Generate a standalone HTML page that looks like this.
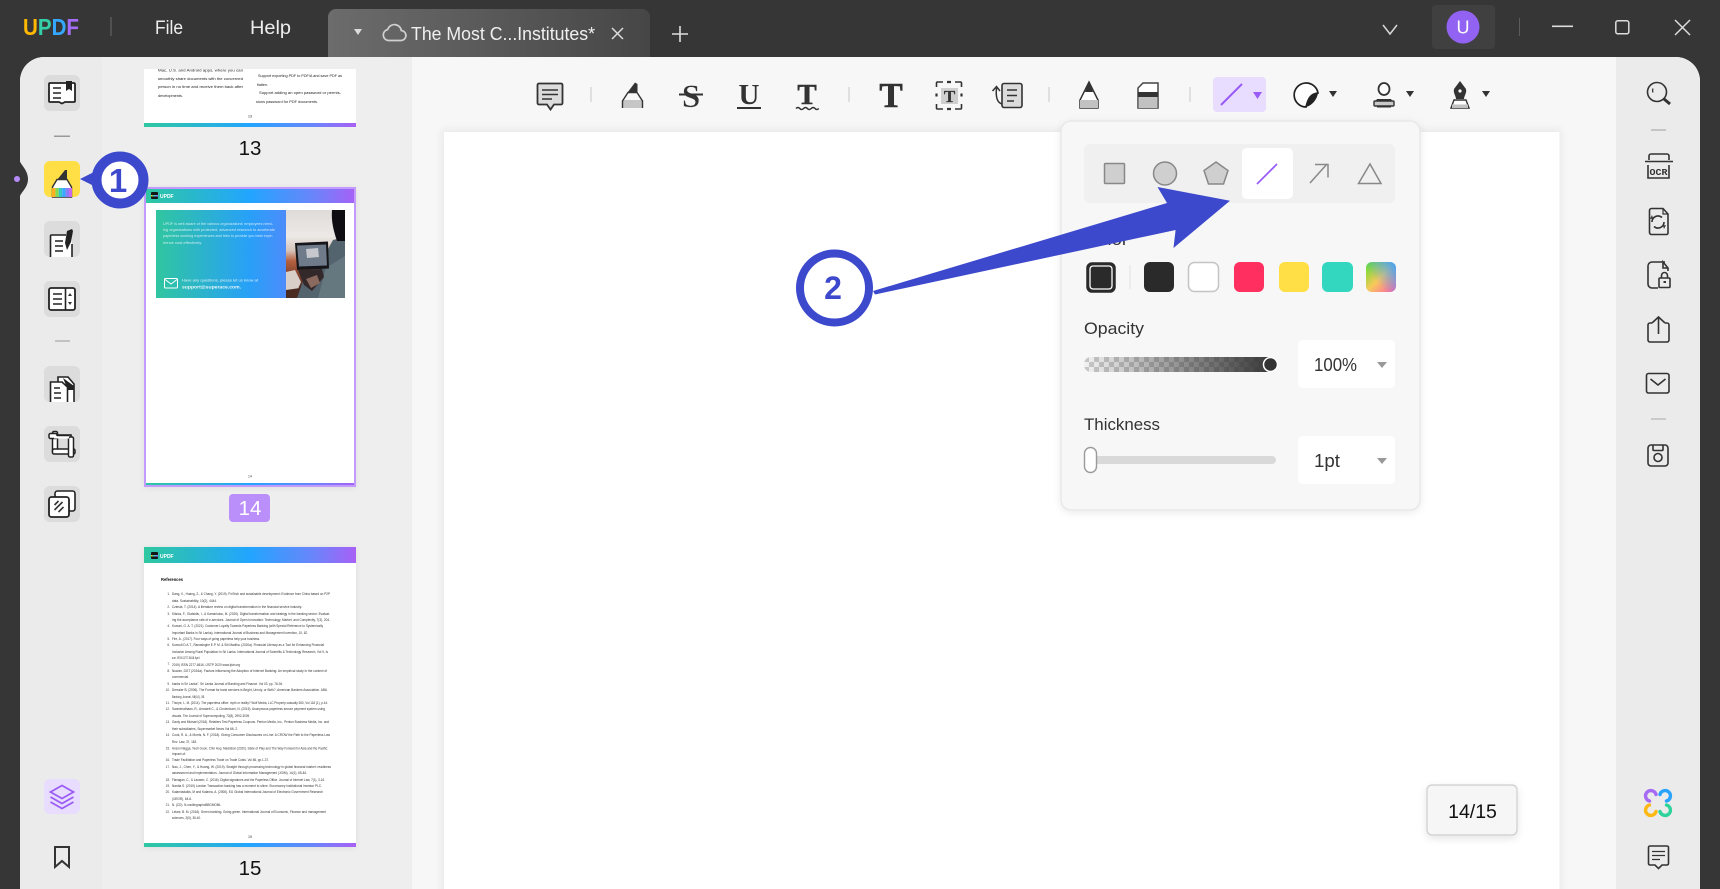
<!DOCTYPE html>
<html><head><meta charset="utf-8"><title>UPDF</title>
<style>html,body{margin:0;padding:0;background:#363636;overflow:hidden;width:1720px;height:889px}svg{display:block;font-family:"Liberation Sans",sans-serif}</style></head>
<body>
<svg width="1720" height="889" viewBox="0 0 1720 889" xmlns="http://www.w3.org/2000/svg">
<defs>
<linearGradient id="tab" x1="0" x2="1" y1="0" y2="0"><stop offset="0" stop-color="#6c6c6c"/><stop offset="1" stop-color="#464646"/></linearGradient>
<linearGradient id="bar" x1="0" x2="1" y1="0" y2="0"><stop offset="0" stop-color="#2ec8a0"/><stop offset=".5" stop-color="#22a5ff"/><stop offset=".8" stop-color="#6a85fb"/><stop offset="1" stop-color="#a860f5"/></linearGradient>
<linearGradient id="card" x1="0" x2="1" y1="0" y2="0"><stop offset="0" stop-color="#30c6a0"/><stop offset=".72" stop-color="#28a0f8"/><stop offset="1" stop-color="#4c8cfa"/></linearGradient>
<linearGradient id="rb" x1="0" x2="1" y1="0" y2="0"><stop offset="0" stop-color="#ffc21c"/><stop offset=".3" stop-color="#4fd67a"/><stop offset=".6" stop-color="#36b2ff"/><stop offset="1" stop-color="#c36af5"/></linearGradient>
<linearGradient id="photo" x1="0" x2="0" y1="0" y2="1"><stop offset="0" stop-color="#dedbd9"/><stop offset=".3" stop-color="#ece9e7"/><stop offset=".46" stop-color="#d6c4ba"/><stop offset=".58" stop-color="#b5603f"/><stop offset=".76" stop-color="#7a3f2c"/><stop offset="1" stop-color="#221c1e"/></linearGradient>
<linearGradient id="op" x1="0" x2="1" y1="0" y2="0"><stop offset="0" stop-color="#333" stop-opacity="0"/><stop offset="1" stop-color="#333"/></linearGradient>
<linearGradient id="sw1" x1="0" x2="1" y1="0" y2="1"><stop offset="0" stop-color="#58e02e"/><stop offset=".5" stop-color="#f7c95a"/><stop offset="1" stop-color="#ff5ab0"/></linearGradient>
<linearGradient id="sw2" x1="1" x2="0.3" y1="0" y2="0.6"><stop offset="0" stop-color="#3aa0ff"/><stop offset="1" stop-color="#3aa0ff" stop-opacity="0"/></linearGradient>
<pattern id="chk" width="10" height="10" patternUnits="userSpaceOnUse" x="1084" y="357"><rect width="10" height="10" fill="#f2f2f2"/><rect width="5" height="5" fill="#c8c8c8"/><rect x="5" y="5" width="5" height="5" fill="#c8c8c8"/></pattern>
<clipPath id="clip13"><rect x="144" y="69" width="212" height="58"/></clipPath>
<clipPath id="photoClip"><rect x="286" y="210" width="59" height="88"/></clipPath>
<filter id="sh" x="-10%" y="-10%" width="120%" height="120%"><feDropShadow dx="0" dy="1" stdDeviation="3" flood-color="#000" flood-opacity=".07"/></filter>
<filter id="shp" x="-10%" y="-10%" width="120%" height="120%"><feDropShadow dx="0" dy="2" stdDeviation="4" flood-color="#000" flood-opacity=".08"/></filter>
<filter id="sh2" x="-5%" y="-5%" width="110%" height="110%"><feGaussianBlur stdDeviation="4"/></filter>
<filter id="sh3" x="-20%" y="-20%" width="140%" height="150%"><feDropShadow dx="0" dy="3" stdDeviation="4" flood-color="#000" flood-opacity=".1"/></filter>
</defs>

<rect width="1720" height="889" fill="#363636"/>

<!-- title bar -->
<text x="23" y="35" font-size="23" font-weight="bold" textLength="56" lengthAdjust="spacingAndGlyphs"><tspan fill="#ffb800">U</tspan><tspan fill="#34cfa8">P</tspan><tspan fill="#35a8ff">D</tspan><tspan fill="#a56cf7">F</tspan></text>
<rect x="110.500" y="17" width="1" height="19" fill="#6a6a6a"/>
<text x="155" y="34" font-size="19" fill="#eee" textLength="28" lengthAdjust="spacingAndGlyphs">File</text>
<text x="250" y="34" font-size="19" fill="#eee" textLength="41" lengthAdjust="spacingAndGlyphs">Help</text>
<path d="M328 65V17a8 8 0 0 1 8-8H642a8 8 0 0 1 8 8V65Z" fill="url(#tab)"/>
<path d="M354 29h8l-4 6z" fill="#ddd"/>
<path d="M388 40.500h12.500a5 5 0 0 0 .8-10 7 7 0 0 0-13.600-1 5.600 5.600 0 0 0 .3 11Z" fill="none" stroke="#d0d0d0" stroke-width="1.700"/>
<text x="411" y="40" font-size="18.500" fill="#f0f0f0" textLength="184" lengthAdjust="spacingAndGlyphs">The Most C...Institutes*</text>
<path d="M612 28l11 11M623 28l-11 11" stroke="#ddd" stroke-width="1.500" fill="none"/>
<path d="M680 26v16M672 34h16" stroke="#ddd" stroke-width="1.600" fill="none"/>
<path d="M1383 25l7 9 7-9" stroke="#d8d8d8" stroke-width="1.500" fill="none"/>
<rect x="1432" y="5" width="63" height="44" rx="4" fill="#404040"/>
<ellipse cx="1463" cy="27" rx="16.500" ry="16.500" fill="#9263f2"/>
<text x="1463" y="33.500" font-size="18" fill="#fff" text-anchor="middle">U</text>
<rect x="1519" y="18" width="1" height="18" fill="#5c5c5c"/>
<rect x="1552" y="25.500" width="21" height="1.600" fill="#ddd"/>
<rect x="1615.800" y="20.800" width="13" height="13" rx="2" fill="none" stroke="#ddd" stroke-width="1.500"/>
<path d="M1675 20l15 15M1690 20l-15 15" stroke="#ddd" stroke-width="1.500" fill="none"/>

<!-- main panel -->
<path d="M20 889V81a24 24 0 0 1 24-24H1676a24 24 0 0 1 24 24V889Z" fill="#f7f7f7"/>
<path d="M20 889V81a24 24 0 0 1 24-24H102V889Z" fill="#ebebeb"/>
<rect x="102" y="57" width="310" height="832" fill="#eeeeee"/>
<path d="M1616 57H1676a24 24 0 0 1 24 24V889H1616Z" fill="#ebebeb"/>
<path d="M19 158c0 6 9 11 9 21s-9 14-9 21Z" fill="#363636"/>
<circle cx="17" cy="179" r="3" fill="#b68cfa"/>

<!-- document page -->
<rect x="441" y="129" width="1121" height="770" fill="#000" opacity=".05" filter="url(#sh2)"/>
<rect x="444" y="132" width="1115.500" height="757" fill="#fff"/>

<!-- left rail -->
<rect x="44" y="75" width="36" height="36" rx="6" fill="#dcdcdc"/>
<path d="M50 83H74a1.500 1.500 0 0 1 1 1.500V101a1 1 0 0 1-1 1H65l-3 1.500-3-1.500H50a1 1 0 0 1-1-1V84a1 1 0 0 1 1-1Z" fill="#fff" stroke="#222" stroke-width="1.800"/>
<path d="M66 81h6v10l-3-2-3 2Z" fill="#222"/>
<path d="M53 88h8M53 93h8M53 98h8" stroke="#222" stroke-width="1.600"/>
<rect x="54" y="135.500" width="16" height="1.500" fill="#999"/>
<rect x="44" y="161" width="36" height="36" rx="6" fill="#ffdf45"/>
<path d="M57 180l8-10h2v10Z" fill="#333"/>
<path d="M57 179.500H67L71.500 187V197H52.500V187Z" fill="#fff" stroke="#333" stroke-width="1.400"/>
<g><rect x="52" y="188" width="3.400" height="9" fill="#ffb01f"/><rect x="55.400" y="188" width="3.400" height="9" fill="#7fd858"/><rect x="58.800" y="188" width="3.400" height="9" fill="#35c8c0"/><rect x="62.200" y="188" width="3.400" height="9" fill="#3aa7ff"/><rect x="65.600" y="188" width="3.400" height="9" fill="#8a7ef8"/><rect x="69" y="188" width="3" height="9" fill="#c56af0"/></g>
<rect x="44" y="221" width="36" height="36" rx="6" fill="#dcdcdc"/>
<path d="M50.500 257V236a1 1 0 0 1 1-1H72V257Z" fill="#fff"/>
<path d="M50.500 257V236a1 1 0 0 1 1-1H66M72 244V257" fill="none" stroke="#222" stroke-width="1.600"/>
<path d="M55 241h8M55 246h8M55 251h8" stroke="#222" stroke-width="1.500"/>
<path d="M67 231l5-2 1 2-2 11-4 8-2-7Z" fill="#222"/>
<rect x="44" y="281" width="36" height="36" rx="6" fill="#dcdcdc"/>
<rect x="49" y="288" width="26" height="22" rx="2" fill="#fff" stroke="#222" stroke-width="1.800"/>
<path d="M65.500 288v22" stroke="#222" stroke-width="1.600"/>
<path d="M53 294h9M53 299h9M53 304h9" stroke="#222" stroke-width="1.500"/>
<path d="M68 296l2-3 2 3ZM68 302l2 3 2-3Z" fill="#333"/>
<rect x="55" y="340.500" width="15" height="1" fill="#999"/>
<rect x="44" y="366" width="36" height="36" rx="6" fill="#dcdcdc"/>
<path d="M58 402V377h10l6 7V402" fill="#fff" stroke="#222" stroke-width="1.600"/>
<path d="M50.500 402V382H62l5.500 5V402Z" fill="#fff"/>
<path d="M50.500 402V382H62l5.500 5V402" fill="none" stroke="#222" stroke-width="1.600"/>
<path d="M54 388h6M54 393h7M54 398h7" stroke="#222" stroke-width="1.500"/>
<path d="M63 378l11 8v4h-6Z" fill="#222"/>
<rect x="44" y="426" width="36" height="36" rx="6" fill="#dcdcdc"/>
<rect x="57" y="435" width="14" height="16" fill="#dcdcdc" stroke="#222" stroke-width="1.600"/>
<rect x="52.500" y="431.500" width="5" height="22" rx="1.500" fill="#fff" stroke="#222" stroke-width="1.500"/>
<rect x="49" y="433.500" width="8" height="5" rx="1.500" fill="#fff" stroke="#222" stroke-width="1.500"/>
<rect x="52.500" y="449" width="22.500" height="5" rx="1.500" fill="#fff" stroke="#222" stroke-width="1.500"/>
<rect x="68.500" y="437" width="5" height="20" rx="1.500" fill="#fff" stroke="#222" stroke-width="1.500"/>
<rect x="54" y="436" width="15" height="2.500" fill="#fff"/>
<path d="M57 435.500h12" stroke="#222" stroke-width="1.500"/>
<rect x="44" y="486" width="36" height="36" rx="6" fill="#dcdcdc"/>
<rect x="55" y="491" width="20" height="20" rx="2.500" fill="#fff" stroke="#222" stroke-width="1.600"/>
<rect x="49" y="497" width="20" height="20" rx="2.500" fill="#fff" stroke="#222" stroke-width="1.800"/>
<path d="M54.500 505l4-4M54.500 510l8-8M58.500 512l5-5" stroke="#333" stroke-width="1.600"/>
<rect x="44" y="779" width="36" height="35" rx="6" fill="#e8dcff"/>
<path d="M50.500 792l11.500-6.500 11.500 6.500-11.500 6.500Z" fill="none" stroke="#9a5cf5" stroke-width="1.800"/>
<path d="M50.500 797l11.500 6.500 11.500-6.500M50.500 802l11.500 6.500 11.500-6.500" fill="none" stroke="#9a5cf5" stroke-width="1.800"/>
<path d="M55 847H69V867L62 861L55 867Z" fill="none" stroke="#333" stroke-width="2"/>

<!-- thumbnail 13 -->
<g clip-path="url(#clip13)">
<rect x="144" y="60" width="212" height="67" fill="#fff"/>
<g font-size="4" fill="#222">
<text x="158" y="71.500" textLength="85" lengthAdjust="spacingAndGlyphs">Mac, U.S. and Android apps, where you can</text>
<text x="158" y="80" textLength="85" lengthAdjust="spacingAndGlyphs">smoothly share documents with the concerned</text>
<text x="158" y="88" textLength="85" lengthAdjust="spacingAndGlyphs">person in no time and receive them back after</text>
<text x="158" y="97" textLength="25" lengthAdjust="spacingAndGlyphs">developments.</text>
<text x="258" y="77" textLength="84" lengthAdjust="spacingAndGlyphs">Support exporting PDF to PDF/A and save PDF as</text>
<text x="257" y="86" textLength="11" lengthAdjust="spacingAndGlyphs">flatten.</text>
<text x="259" y="94" textLength="82" lengthAdjust="spacingAndGlyphs">Support adding an open password or permis-</text>
<text x="256" y="103" textLength="62" lengthAdjust="spacingAndGlyphs">sions password for PDF documents.</text>
<text x="250" y="117.500" text-anchor="middle" font-size="3.500">13</text>
</g>
<rect x="144" y="123" width="212" height="4" fill="url(#bar)"/>
</g>
<text x="250" y="155" font-size="20.500" fill="#111" text-anchor="middle">13</text>

<!-- thumbnail 14 -->
<rect x="144" y="187" width="212" height="300" fill="#fff" filter="url(#sh)"/>
<rect x="144" y="187" width="212" height="16" fill="url(#bar)"/>
<rect x="151" y="192" width="7" height="7" rx="1" fill="#161616"/><rect x="151" y="195" width="7" height="1.500" fill="url(#rb)"/>
<text x="160" y="198" font-size="5" font-weight="bold" fill="#fff">UPDF</text>
<rect x="156" y="210" width="130" height="88" fill="url(#card)"/>
<g font-size="3.500" fill="#fff" opacity=".75">
<text x="163" y="225" textLength="110" lengthAdjust="spacingAndGlyphs">UPDF is well aware of the various organizations' employees need-</text>
<text x="163" y="231" textLength="112" lengthAdjust="spacingAndGlyphs">ing organizations with protected, advanced research to accelerate</text>
<text x="163" y="237" textLength="110" lengthAdjust="spacingAndGlyphs">paperless working experiences and tries to provide you best expe-</text>
<text x="163" y="244" textLength="39" lengthAdjust="spacingAndGlyphs">rience cost-effectively.</text>
</g>
<rect x="164.500" y="278.500" width="13" height="9.500" rx="1" fill="none" stroke="#fff" stroke-width="1"/>
<path d="M165 279.500l6 4.500 6-4.500" fill="none" stroke="#fff" stroke-width="1"/>
<text x="182" y="281.500" font-size="3.800" fill="#fff" opacity=".85" textLength="76" lengthAdjust="spacingAndGlyphs">Have any questions, please let us know at</text>
<text x="182" y="288.500" font-size="4.800" font-weight="bold" fill="#fff" opacity=".9" textLength="59" lengthAdjust="spacingAndGlyphs">support@superace.com.</text>
<g clip-path="url(#photoClip)">
<rect x="286" y="210" width="59" height="88" fill="url(#photo)"/>
<path d="M286 272l9-2 6 12-3 7-12 2Z" fill="#d8cfc8"/>
<path d="M286 290l14-2-3 10h-11Z" fill="#4a2a20"/>
<path d="M297 298l6-17 20-23 10-18 12-3v61Z" fill="#54646e"/>
<path d="M318 298l8-30 19-12v42Z" fill="#66787f"/>
<path d="M332 210h13v31h-8c-3-9-6-19-5-31Z" fill="#0e0d11"/>
<path d="M295 243l33-1.500 1 27-32 1.500Z" fill="#15151a"/>
<path d="M297 245.500l29-1 1 21-28 1Z" fill="#6f7a8a"/>
<path d="M306 249l12-1 1 9-12 1Z" fill="#c6c8ce"/>
<path d="M298 270l24-1 2 8-12 14-8-6Z" fill="#33282a"/>
<path d="M306 279l11-4 3 8-9 5Z" fill="#8a6a5e"/>
</g>
<text x="250" y="477.500" text-anchor="middle" font-size="3.500" fill="#444">14</text>
<rect x="144" y="483" width="212" height="4" fill="url(#bar)"/>
<rect x="145" y="188" width="210" height="298" fill="none" stroke="#c39bff" stroke-width="2"/>
<rect x="229" y="494" width="41" height="28" rx="4" fill="#bb8ff9"/>
<text x="250" y="515" font-size="20.500" fill="#fff" text-anchor="middle">14</text>

<!-- thumbnail 15 -->
<rect x="144" y="547" width="212" height="300" fill="#fff" filter="url(#sh)"/>
<rect x="144" y="547" width="212" height="16" fill="url(#bar)"/>
<rect x="151" y="552" width="7" height="7" rx="1" fill="#161616"/><rect x="151" y="555" width="7" height="1.500" fill="url(#rb)"/>
<text x="160" y="558" font-size="5" font-weight="bold" fill="#fff">UPDF</text>
<text x="161" y="581" font-size="4.200" font-weight="bold" fill="#111" textLength="22" lengthAdjust="spacingAndGlyphs">References</text>
<g font-size="3.600" fill="#333">
<text x="172" y="595" textLength="158" lengthAdjust="spacingAndGlyphs">Dang, X., Huang, Z., &amp; Chang, Y. (2019). FinTech and sustainable development: Evidence from China based on P2P</text>
<text x="172" y="602" textLength="45" lengthAdjust="spacingAndGlyphs">data. Sustainability, 10(2), 4444.</text>
<text x="172" y="608" textLength="130" lengthAdjust="spacingAndGlyphs">Cziesla, T. (2014). A literature review on digital transformation in the financial service industry.</text>
<text x="172" y="615" textLength="158" lengthAdjust="spacingAndGlyphs">Kitsios, F., Giatsidis, I., &amp; Kamariotou, M. (2020). Digital transformation and strategy in the banking sector: Evaluat-</text>
<text x="172" y="621" textLength="158" lengthAdjust="spacingAndGlyphs">ing the acceptance rate of e-services. Journal of Open Innovation: Technology, Market, and Complexity, 7(3), 204.</text>
<text x="172" y="627" textLength="151" lengthAdjust="spacingAndGlyphs">Kumari, G. A. T. (2021). Customer Loyalty Towards Paperless Banking (with Special Reference to Systemically</text>
<text x="172" y="634" textLength="136" lengthAdjust="spacingAndGlyphs">Important Banks in Sri Lanka). International Journal of Business and Management Invention, 10, 62.</text>
<text x="172" y="640" textLength="88" lengthAdjust="spacingAndGlyphs">Fire, A., (2017). Four ways of going paperless help your business.</text>
<text x="172" y="646" textLength="152" lengthAdjust="spacingAndGlyphs">Kumudi D.A.T., Ranasinghe E.P. M. &amp; Siti Madiha. (2020a). Financial Literacy as a Tool for Enhancing Financial</text>
<text x="172" y="653" textLength="156" lengthAdjust="spacingAndGlyphs">Inclusion Among Rural Population in Sri Lanka. International Journal of Scientific &amp; Technology Research, Vol 9, Is</text>
<text x="172" y="659" textLength="28" lengthAdjust="spacingAndGlyphs">sue. ISSN 2277-8616 April.</text>
<text x="172" y="666" textLength="68" lengthAdjust="spacingAndGlyphs">2019) ISSN 2277-8616. IJSTP 2020 www.ijstr.org</text>
<text x="172" y="672" textLength="155" lengthAdjust="spacingAndGlyphs">Nuwan, DGT (2016a). Factors influencing the Adoption of Internet Banking: An empirical study in the context of</text>
<text x="172" y="678" textLength="17" lengthAdjust="spacingAndGlyphs">commercial.</text>
<text x="172" y="685" textLength="111" lengthAdjust="spacingAndGlyphs">banks in Sri Lanka". Sri Lanka Journal of Banking and Finance. Vol 03. pp. 78-94.</text>
<text x="172" y="691" textLength="155" lengthAdjust="spacingAndGlyphs">Dressler B. (2006). The Format for bank services is Bright, Unruly, or Both?, American Bankers Association. ABA</text>
<text x="172" y="698" textLength="33" lengthAdjust="spacingAndGlyphs">Banking Journal, 98(10), 55.</text>
<text x="172" y="704" textLength="156" lengthAdjust="spacingAndGlyphs">Thorpe, L. M. (2014). The paperless office: myth or reality? Wolf Media, LLC Property casualty 360, Vol 118 (1), p.44.</text>
<text x="172" y="710" textLength="153" lengthAdjust="spacingAndGlyphs">Swaminathaan, R., Amosett C., &amp; Cholenkumi, N. (2015). Anonymous paperless secure payment system using</text>
<text x="172" y="717" textLength="78" lengthAdjust="spacingAndGlyphs">visuals. The Journal of Supercomputing, 72(8), 2992-3009.</text>
<text x="172" y="723" textLength="157" lengthAdjust="spacingAndGlyphs">Ganly and Michael (2018). Retailers Test Paperless Coupons. Penton Media, Inc., Penton Business Media, Inc. and</text>
<text x="172" y="730" textLength="66" lengthAdjust="spacingAndGlyphs">their subsidiaries, Supermarket News Vol 66. 2.</text>
<text x="172" y="736" textLength="158" lengthAdjust="spacingAndGlyphs">Cook, R. A., &amp; Morris, N. F. (2018). Giving Consumer Disclosures on Line: A CROW the Path to the Paperless Law</text>
<text x="172" y="743" textLength="25" lengthAdjust="spacingAndGlyphs">Rev. Law, 37, 183.</text>
<text x="172" y="749.500" textLength="156" lengthAdjust="spacingAndGlyphs">Anson Nagga, Yeoh Goon, Chin Hop, Maddison (2020). State of Play and The Way Forward for Asia and the Pacific:</text>
<text x="172" y="755" textLength="14" lengthAdjust="spacingAndGlyphs">Impact of.</text>
<text x="172" y="761" textLength="97" lengthAdjust="spacingAndGlyphs">Trade Facilitation and Paperless Trade on Trade Costs. Vol 86, pp.1-37.</text>
<text x="172" y="768" textLength="159" lengthAdjust="spacingAndGlyphs">Nao, J., Chen, Y., &amp; Huang, W. (2019). Straight through processing technology in global financial market: readiness</text>
<text x="172" y="774" textLength="135" lengthAdjust="spacingAndGlyphs">assessment and implementation. Journal of Global Information Management (JGIM), 14(1), 65-84.</text>
<text x="172" y="781" textLength="153" lengthAdjust="spacingAndGlyphs">Flanagan, C., &amp; Lauwen, C. (2016). Digital signatures and the Paperless Office. Journal of Internet Law, 7(1), 3-16.</text>
<text x="172" y="787" textLength="150" lengthAdjust="spacingAndGlyphs">Nardia S. (2019) London Transaction banking has a moment to shine. Euromoney Institutional Investor PLC.</text>
<text x="172" y="793" textLength="151" lengthAdjust="spacingAndGlyphs">Kalamiadakis, M and Kalama, A. (2006). EU Global International Journal of Electronic Government Research</text>
<text x="172" y="800" textLength="20" lengthAdjust="spacingAndGlyphs">(IJEGR), 64-6.</text>
<text x="172" y="806" textLength="49" lengthAdjust="spacingAndGlyphs">N. (CD). N.unctilegraphcBBGMOML</text>
<text x="172" y="813" textLength="154" lengthAdjust="spacingAndGlyphs">Lelani, B. M. (2018). Green banking. Going green. International Journal of Economic, Finance and management</text>
<text x="172" y="819" textLength="29" lengthAdjust="spacingAndGlyphs">sciences, 3(5), 36-40.</text>
<text x="250" y="838" text-anchor="middle" font-size="3.500">15</text>
</g>
<g font-size="3.200" fill="#444" text-anchor="end">
<text x="170" y="595">1.</text><text x="170" y="608">2.</text><text x="170" y="615">3.</text><text x="170" y="627">4.</text><text x="170" y="640">5.</text><text x="170" y="646">6.</text><text x="170" y="665">7.</text><text x="170" y="672">8.</text><text x="170" y="685">9.</text><text x="170" y="691">10.</text><text x="170" y="704">11.</text><text x="170" y="710">12.</text><text x="170" y="723">13.</text><text x="170" y="736">14.</text><text x="170" y="749.500">15.</text><text x="170" y="761">16.</text><text x="170" y="768">17.</text><text x="170" y="781">18.</text><text x="170" y="787">19.</text><text x="170" y="793">20.</text><text x="170" y="806">21.</text><text x="170" y="813">22.</text>
</g>
<rect x="144" y="843" width="212" height="4" fill="url(#bar)"/>
<text x="250" y="875" font-size="20.500" fill="#111" text-anchor="middle">15</text>

<!-- toolbar icons -->
<path d="M539 83.500H561a1.500 1.500 0 0 1 1.500 1.500V103a1.500 1.500 0 0 1-1.500 1.500H554l-3.500 5-3.500-5H539a1.500 1.500 0 0 1-1.500-1.500V85a1.500 1.500 0 0 1 1.500-1.500Z" fill="#dcdcdc" stroke="#333" stroke-width="1.800"/>
<path d="M542 90h16M542 94.500h16M542 99h10" stroke="#333" stroke-width="1.500"/>
<rect x="590.500" y="87" width="1" height="15" fill="#c9c9c9"/>
<rect x="623" y="100" width="19" height="8" fill="#c6c6c6"/>
<path d="M622.500 108V101L628 92.500H637L642.500 101V108" fill="none" stroke="#333" stroke-width="1.400"/>
<path d="M627.500 92.500L635 82.500 637.500 84V92.500Z" fill="#333"/>
<text x="691" y="107" font-size="33" font-family="Liberation Serif,serif" font-weight="bold" fill="#333" text-anchor="middle" stroke="#f7f7f7" stroke-width=".3">S</text>
<path d="M679 94.500h24" stroke="#333" stroke-width="2"/>
<text x="749" y="104" font-size="29" font-family="Liberation Serif,serif" font-weight="bold" fill="#333" text-anchor="middle">U</text>
<path d="M737 108h24" stroke="#333" stroke-width="2"/>
<text x="807" y="104" font-size="29" font-family="Liberation Serif,serif" font-weight="bold" fill="#333" text-anchor="middle" stroke="#333" stroke-width=".5">T</text>
<path d="M796 108.500q2-2 3.800 0t3.800 0 3.800 0 3.800 0 3.800 0 3.800 0" stroke="#333" stroke-width="1.500" fill="none"/>
<rect x="848.500" y="87" width="1" height="15" fill="#c9c9c9"/>
<text x="891" y="107" font-size="35" font-family="Liberation Serif,serif" font-weight="bold" fill="#333" text-anchor="middle" stroke="#333" stroke-width=".6">T</text>
<rect x="941" y="88" width="17" height="16" fill="#cfcfcf"/>
<path d="M936.500 87v-4a1 1 0 0 1 1-1H943M955 82h5.500a1 1 0 0 1 1 1v4M961.500 104v4a1 1 0 0 1-1 1H955M943 109h-5.500a1 1 0 0 1-1-1v-4" stroke="#333" stroke-width="1.600" fill="none"/>
<path d="M947 82h4M947 109h4M936.500 93.500v3M961.500 93.500v3" stroke="#333" stroke-width="2.200" fill="none"/>
<text x="949.500" y="102" font-size="17" font-family="Liberation Serif,serif" font-weight="bold" fill="#333" text-anchor="middle" stroke="#333" stroke-width=".3">T</text>
<rect x="1002" y="83.500" width="20" height="24" rx="2" fill="#dcdcdc" stroke="#333" stroke-width="1.600"/>
<path d="M1007 90h10M1007 95.500h10M1007 101h7" stroke="#333" stroke-width="1.500"/>
<path d="M1002 104q-7-2-5.500-16M992.500 91l4-4.500 3.500 4.500" stroke="#333" stroke-width="1.500" fill="none"/>
<rect x="1048.500" y="87" width="1" height="15" fill="#c9c9c9"/>
<path d="M1080 108v-8l9-18 9 18v8Z" fill="#fff" stroke="#333" stroke-width="1.500"/>
<path d="M1085 92l4-10 4 10Z" fill="#333"/>
<path d="M1080 100h18v8h-18Z" fill="#c2c2c2"/>
<path d="M1138 108V88l5-5h15v25Z" fill="#fff" stroke="#444" stroke-width="1.500"/>
<rect x="1138" y="92" width="20" height="5" fill="#333"/><rect x="1138.500" y="97" width="19" height="11" fill="#c2c2c2"/>
<rect x="1189.500" y="87" width="1" height="15" fill="#c9c9c9"/>
<rect x="1213" y="77" width="53" height="35" rx="4" fill="#e8dcff"/>
<path d="M1221 105l21-21" stroke="#9a5cf5" stroke-width="2"/>
<path d="M1253 92h9l-4.500 7Z" fill="#9a5cf5"/>
<path d="M1306 107a12 12 0 1 1 12-14c-8 1-10 6-12 14Z" fill="#fff" stroke="#222" stroke-width="1.700"/>
<path d="M1306 107c2-8 4-13 12-14-1 6-5 12-12 14Z" fill="#222"/>
<path d="M1329 91h8l-4 6Z" fill="#333"/>
<ellipse cx="1384" cy="89" rx="5.500" ry="6" fill="#fff" stroke="#333" stroke-width="1.800"/>
<path d="M1377 99h14l2 3H1375Z" fill="#333"/>
<rect x="1374" y="101" width="20" height="5" rx="1" fill="#c8c8c8" stroke="#333" stroke-width="1.400"/><rect x="1377" y="105.500" width="14" height="2" fill="#333"/>
<path d="M1406 91h8l-4 6Z" fill="#333"/>
<path d="M1460 81l6 8c1 4-2 7-2 10H1456c0-3-3-6-2-10Z" fill="#333"/>
<circle cx="1460" cy="91" r="1.600" fill="#fff"/>
<path d="M1454 100h12l3 8h-18Z" fill="#fff" stroke="#333" stroke-width="1.400"/>
<rect x="1452" y="104.500" width="16" height="3.500" fill="#c2c2c2"/>
<path d="M1482 91h8l-4 6Z" fill="#333"/>

<!-- right rail -->
<g fill="none" stroke="#333" stroke-width="1.600">
<circle cx="1657" cy="92" r="9.500"/>
<path d="M1653 88.500a5 5 0 0 0 0 4" stroke-width="1.200"/>
<path d="M1664 99l6 5" stroke-width="3"/>
<path d="M1651 130h15" stroke="#aaa" stroke-width="1.200"/>
<path d="M1649 160v-4a2 2 0 0 1 2-2h16a2 2 0 0 1 2 2v4M1645 161.500h28M1648 165v13h21v-13"/>
<path d="M1652 208.500h11l5 5.500v19a1.500 1.500 0 0 1-1.500 1.500h-15a2 2 0 0 1-2-2v-22a2 2 0 0 1 2-2Z"/>
<path d="M1663 208.500v5.500h5" stroke-width="1.200"/>
<path d="M1652 222a6 6 0 0 1 10-4.500M1664 222a6 6 0 0 1-10 4.500"/>
<path d="M1665 262h-13a4 4 0 0 0-4 4v18a4 4 0 0 0 4 4h6M1668 271v-3l-5-6v6h5"/>
<rect x="1659" y="278" width="11" height="9.500" rx="1"/>
<path d="M1661.500 278v-2.500a3 3 0 0 1 6 0v2.500"/>
<path d="M1652 323h-2a2 2 0 0 0-2 2v15a2 2 0 0 0 2 2h17a2 2 0 0 0 2-2v-15a2 2 0 0 0-2-2h-2M1658.500 334v-16M1652 323l6.500-6 6.500 6"/>
<rect x="1646.500" y="373.500" width="22.500" height="19.500" rx="2"/>
<path d="M1650.500 379l7.500 6 7.500-6"/>
<path d="M1651 419h15" stroke="#aaa" stroke-width="1"/>
<rect x="1648" y="445" width="20" height="21" rx="3"/>
<path d="M1653 445v4.500a1 1 0 0 0 1 1h8a1 1 0 0 0 1-1v-4.500"/>
<circle cx="1658" cy="457.500" r="4"/>
<path d="M1650 846h17a1.500 1.500 0 0 1 1.500 1.500v16a1.500 1.500 0 0 1-1.500 1.500h-5l-3.500 3.500-3.500-3.500h-5a1.500 1.500 0 0 1-1.500-1.500v-16a1.500 1.500 0 0 1 1.500-1.500Z"/>
<path d="M1652 851.500h13M1652 855.500h13M1652 859.500h8" stroke-width="1.300"/>
</g>
<text x="1658.500" y="175" font-size="9.500" font-family="Liberation Mono,monospace" font-weight="bold" fill="#333" text-anchor="middle" textLength="18" lengthAdjust="spacingAndGlyphs">OCR</text>
<path d="M1652 215l1 3.500-3 .5ZM1664 229l-1-3.500 3-.5Z" fill="#333"/>
<rect x="1663.500" y="281" width="2.500" height="2" fill="#333"/>
<g transform="translate(1658 803)" fill="none" stroke-width="3.400" stroke-linecap="round">
<path d="M-2,-8.500 A5.300 5.300 0 1 0 -8.500,-2" stroke="#a56bf5"/>
<path d="M2,-8.500 A5.300 5.300 0 1 1 8.500,-2" stroke="#2aa3ff"/>
<path d="M-2,8.500 A5.300 5.300 0 1 1 -8.500,2" stroke="#fdb913"/>
<path d="M2,8.500 A5.300 5.300 0 1 0 8.500,2" stroke="#2ed29b"/>
</g>

<!-- pager -->
<rect x="1427" y="785" width="90" height="50" rx="5" fill="#f6f6f6" stroke="#cdcdcd" stroke-width="1.200" filter="url(#sh3)"/>
<text x="1472.500" y="818" font-size="19.500" fill="#111" text-anchor="middle">14/15</text>

<!-- popup -->
<rect x="1061" y="121" width="359" height="389" rx="10" fill="#f7f7f7" stroke="#e8e8e8" stroke-width="1.500" filter="url(#shp)"/>
<rect x="1084" y="144" width="311" height="59" rx="6" fill="#f0f0f0"/>
<rect x="1242" y="148" width="51" height="51" rx="5" fill="#fff"/>
<rect x="1104.500" y="163.500" width="20" height="20" rx="1" fill="#cfcfcf" stroke="#888" stroke-width="1.500"/>
<circle cx="1165" cy="173.500" r="11.500" fill="#cfcfcf" stroke="#888" stroke-width="1.500"/>
<path d="M1216 162l12 8.500-4.500 13.500h-15l-4.500-13.500Z" fill="#cfcfcf" stroke="#888" stroke-width="1.500"/>
<path d="M1257 184l20-20" stroke="#9a5cf5" stroke-width="1.700"/>
<path d="M1310 183l17-19M1315 164.500h13v13" stroke="#888" stroke-width="1.500" fill="none"/>
<path d="M1370 164l11 19.500h-22.500Z" fill="none" stroke="#888" stroke-width="1.500"/>

<text x="1084" y="245" font-size="17" fill="#333" textLength="44" lengthAdjust="spacingAndGlyphs">Color</text>
<rect x="1087" y="263" width="28" height="29" rx="5" fill="#2a2a2a" stroke="#2a2a2a" stroke-width="1.500"/>
<rect x="1090" y="266" width="22" height="23" rx="3" fill="#2a2a2a" stroke="#fff" stroke-width="1.300"/>
<rect x="1129.500" y="265" width="1" height="24" fill="#e2e2e2"/>
<rect x="1144" y="262" width="30" height="30" rx="6" fill="#2a2a2a"/>
<rect x="1188.500" y="262.500" width="30" height="29" rx="6" fill="#fff" stroke="#c4c4c4" stroke-width="1.500"/>
<rect x="1234" y="262" width="30" height="30" rx="6" fill="#ff2f5f"/>
<rect x="1279" y="262" width="30" height="30" rx="6" fill="#ffdf45"/>
<rect x="1322" y="262" width="31" height="30" rx="6" fill="#33d7bf"/>
<rect x="1366" y="262" width="30" height="30" rx="6" fill="url(#sw1)"/>
<rect x="1366" y="262" width="30" height="30" rx="6" fill="url(#sw2)"/>

<text x="1084" y="334" font-size="17" fill="#333" textLength="60" lengthAdjust="spacingAndGlyphs">Opacity</text>
<rect x="1084" y="357" width="193" height="15" rx="7" fill="url(#chk)"/>
<rect x="1084" y="357" width="193" height="15" rx="7" fill="url(#op)"/>
<circle cx="1270.500" cy="364.500" r="7" fill="#333" stroke="#fff" stroke-width="1.500"/>
<rect x="1298" y="340" width="97" height="48" rx="4" fill="#fff"/>
<text x="1314" y="371" font-size="18" fill="#333" textLength="43" lengthAdjust="spacingAndGlyphs">100%</text>
<path d="M1377 362h10l-5 6Z" fill="#999"/>

<text x="1084" y="430" font-size="17" fill="#333" textLength="76" lengthAdjust="spacingAndGlyphs">Thickness</text>
<rect x="1090" y="456" width="186" height="8" rx="4" fill="#d9d9d9"/>
<rect x="1084.500" y="447.500" width="12" height="25" rx="6" fill="#fff" stroke="#9a9a9a" stroke-width="1.400"/>
<rect x="1298" y="436" width="97" height="48" rx="4" fill="#fff"/>
<text x="1314" y="467" font-size="18" fill="#333" textLength="26" lengthAdjust="spacingAndGlyphs">1pt</text>
<path d="M1377 458h10l-5 6Z" fill="#999"/>

<!-- annotations -->
<path d="M873 291L875 294.500L1175.600 230L1173.500 248L1230 200.700L1157.500 187L1167 203Z" fill="#3d49cc"/>
<circle cx="834.500" cy="288" r="34.500" fill="#fff" stroke="#3d49cc" stroke-width="8"/>
<text x="833" y="299" font-size="32" font-weight="bold" fill="#3d49cc" text-anchor="middle">2</text>
<path d="M80 179l22-11v22Z" fill="#3d49cc"/>
<circle cx="120" cy="180" r="23.500" fill="#fff" stroke="#3d49cc" stroke-width="10"/>
<text x="118" y="192" font-size="33" font-weight="bold" fill="#3d49cc" text-anchor="middle">1</text>
</svg>
</body></html>
